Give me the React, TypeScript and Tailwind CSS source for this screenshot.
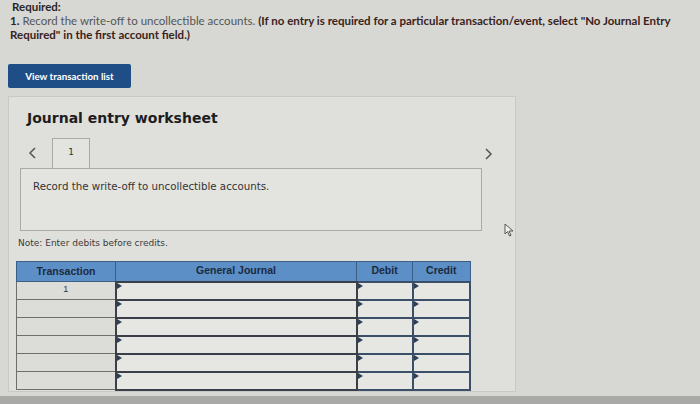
const rows = ["1", "", "", "", "", ""];

function Marker() {
  return <span className="absolute left-0 top-0 h-0 w-0 border-y-[3px] border-l-[5px] border-y-transparent border-l-[#2d3e55]" />;
}

export default function App() {
  return (
    <div className="flex h-[404px] w-[700px] flex-col overflow-hidden bg-[#d7d8d4] font-['Lato',sans-serif]">
      <div className="shrink-0 px-[10px] text-[11.5px] leading-[14px] text-[#3a3a3a]">
        <div className="pl-[2px] font-bold text-[#2a2626]">Required:</div>
        <div className="flex gap-[3px] whitespace-nowrap">
          <span className="font-bold text-[#2a2626]">1.</span>
          <span className="text-[#555]">Record the write-off to uncollectible accounts.</span>
          <span className="font-bold text-[#3a2220]">
            (If no entry is required for a particular transaction/event, select "No Journal Entry
          </span>
        </div>
        <div className="font-bold text-[#3a2220]">Required" in the first account field.)</div>
      </div>
      <div className="flex shrink-0 pl-[8px] pt-[22px]">
        <button className="h-[24px] w-[123px] rounded-[2px] bg-[#1f4d86] text-[9.75px] font-bold text-white">
          View transaction list
        </button>
      </div>
      <div className="relative ml-[8px] mt-[8px] flex h-[296px] w-[508px] shrink-0 flex-col overflow-hidden border border-[#c8c9c4] bg-[#dfe0db]">
        <div className="shrink-0 pl-[18px] pt-[11px] font-['DejaVu_Sans',sans-serif] text-[14px] font-bold leading-[20px] text-[#1d1d1d]">
          Journal entry worksheet
        </div>
        <div className="mt-[10px] flex shrink-0 items-end">
          <div className="flex w-[43px] self-center pl-[19px]">
            <svg width="9" height="12" viewBox="0 0 9 12">
              <path d="M7 1 L2 6 L7 11" fill="none" stroke="#555" strokeWidth="1.5" />
            </svg>
          </div>
          <div className="mb-[-1px] flex h-[31px] w-[38px] justify-center border border-b-0 border-[#a9aaa5] bg-[#e3e4df] pt-[7px] font-['DejaVu_Sans',sans-serif] text-[9px] text-[#333]">
            1
          </div>
          <div className="flex-1" />
          <div className="mr-[22px] flex self-center pt-[2px]">
            <svg width="9" height="12" viewBox="0 0 9 12">
              <path d="M2 1 L7 6 L2 11" fill="none" stroke="#555" strokeWidth="1.5" />
            </svg>
          </div>
        </div>
        <div className="ml-[11px] h-[63px] w-[462px] shrink-0 border border-[#a9aaa5] bg-[#e3e4df] pl-[12px] pt-[10px] font-['DejaVu_Sans',sans-serif] text-[10.25px] text-[#333]">
          Record the write-off to uncollectible accounts.
        </div>
        <div className="shrink-0 pl-[9px] pt-[6px] font-['DejaVu_Sans',sans-serif] text-[9px] leading-[12px] text-[#3a3a3a]">
          Note: Enter debits before credits.
        </div>
        <table className="ml-[7px] mt-[12px] w-[455px] shrink-0 border-collapse font-['Liberation_Sans',sans-serif] text-[10.5px]">
          <thead>
            <tr className="h-[20px] bg-[#5b8fc6] font-bold text-[#1c2a3e]">
              <th className="w-[99px] border border-[#3c5f86]">Transaction</th>
              <th className="w-[241px] border border-[#3c5f86]">General Journal</th>
              <th className="w-[56px] border border-[#3c5f86]">Debit</th>
              <th className="border border-[#3c5f86]">Credit</th>
            </tr>
          </thead>
          <tbody>
            {rows.map((r, i) => (
              <tr key={i} className="h-[18px]">
                <td className="border border-[#6f706d] bg-[#dcddd8] text-center align-top text-[9px] leading-[15px] text-[#333]">{r}</td>
                <td className="relative border-2 border-[#3b4048] bg-[#e6e7e2]">
                  <Marker />
                </td>
                <td className="relative border-2 border-[#3b5068] bg-[#e6e7e2]">
                  <Marker />
                </td>
                <td className="relative border-2 border-[#3b5068] bg-[#e6e7e2]">
                  <Marker />
                </td>
              </tr>
            ))}
          </tbody>
        </table>
        <svg className="absolute left-[495px] top-[126px]" width="11" height="14" viewBox="0 0 11 14">
          <path d="M1 1 L1 11 L3.5 8.5 L5.5 13 L7 12.3 L5 8 L9 8 Z" fill="#f2f2ef" stroke="#555" strokeWidth="1" />
        </svg>
      </div>
      <div className="flex-1" />
      <div className="h-[8px] shrink-0 bg-[#a9aaa7]" />
    </div>
  );
}
